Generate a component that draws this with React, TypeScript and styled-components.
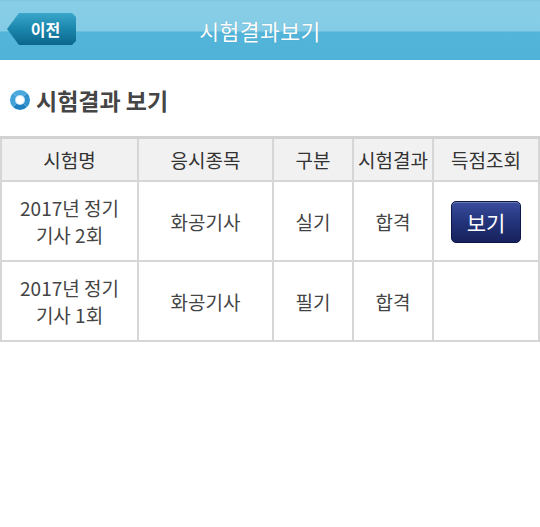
import React from 'react';
import styled, { createGlobalStyle } from 'styled-components';

const GlobalStyle = createGlobalStyle`
  html, body {
    margin: 0;
    padding: 0;
    background: #fff;
    font-family: "Noto Sans CJK KR", "Noto Sans", sans-serif;
  }
`;

const StyledHeader = styled.header`
  position: relative;
  height: 60px;
  display: flex;
  align-items: center;
  justify-content: center;
  padding-right: 20px;
  box-sizing: border-box;
  background: linear-gradient(
    to bottom,
    #7cc6e1 0,
    #88cee7 2px,
    #84cbe5 31px,
    #53b5d9 32px,
    #4fb2d7 60px
  );
`;

const StyledTitle = styled.h1`
  margin: 0;
  font-size: 21.5px;
  font-weight: 400;
  color: #fff;
  text-shadow: 0 0 1px rgba(0, 80, 120, 0.3);
  letter-spacing: 0.5px;
`;

const StyledBackButton = styled.button`
  position: absolute;
  left: 7px;
  top: 13px;
  width: 69px;
  height: 32px;
  border: none;
  padding: 0 0 0 8px;
  color: #fff;
  font-family: inherit;
  font-size: 16px;
  font-weight: 700;
  background: linear-gradient(to bottom, #3aa6c9 0%, #1b86ad 50%, #0b668b 100%);
  clip-path: polygon(12px 0, calc(100% - 4px) 0, 100% 4px, 100% calc(100% - 4px), calc(100% - 4px) 100%, 12px 100%, 0 50%);
`;

const StyledSection = styled.section`
  padding: 20px 0 0;
`;

const StyledSectionTitle = styled.h2`
  display: flex;
  align-items: center;
  gap: 6px;
  margin: 0 0 16px 10px;
  font-size: 23px;
  font-weight: 700;
  color: #454545;
  line-height: 40px;
`;

const StyledBullet = styled.span`
  width: 20px;
  height: 20px;
  border-radius: 50%;
  box-sizing: border-box;
  border: 5px solid #3aa0d6;
  background: #fff;
  background-clip: padding-box;
  box-shadow: inset 0 0 0 1px #b9def2;
  border-color: #4aa9dc #2f92cd #1f7fc0 #3fa2d8;
`;

const StyledTable = styled.table`
  width: 540px;
  border-collapse: collapse;
  table-layout: fixed;
  border-top: 3px solid #d2d2d2;
  color: #444;
`;

const StyledTh = styled.th<{ $width?: number }>`
  ${({ $width }) => ($width ? `width: ${$width}px;` : '')}
  height: 41px;
  padding: 0;
  background: #f1f1f1;
  border: 2px solid #d6d6d6;
  border-top: none;
  font-size: 19px;
  font-weight: 400;
  color: #333;
  text-align: center;
  white-space: nowrap;
`;

const StyledTd = styled.td`
  height: 78px;
  padding: 0;
  border: 2px solid #d6d6d6;
  font-size: 19px;
  line-height: 27px;
  color: #444;
  text-align: center;
`;

const StyledViewButton = styled.button`
  width: 70px;
  height: 42px;
  border: 1px solid #0e1848;
  border-radius: 5px;
  color: #fff;
  font-family: inherit;
  font-size: 21px;
  background: linear-gradient(to bottom, #3a4d9c 0%, #23337a 50%, #17225d 100%);
  box-shadow: inset 0 1px 0 rgba(255, 255, 255, 0.25);
  margin-top: 2px;
`;

const columns = [
  { label: '시험명', width: 135 },
  { label: '응시종목', width: 133 },
  { label: '구분', width: 78 },
  { label: '시험결과', width: 78 },
  { label: '득점조회' },
];

const results = [
  { round: '2회', subject: '화공기사', type: '실기', result: '합격', viewable: true },
  { round: '1회', subject: '화공기사', type: '필기', result: '합격', viewable: false },
];

export default function App() {
  return (
    <>
      <GlobalStyle />
      <StyledHeader>
        <StyledBackButton>이전</StyledBackButton>
        <StyledTitle>시험결과보기</StyledTitle>
      </StyledHeader>
      <StyledSection>
        <StyledSectionTitle>
          <StyledBullet />
          시험결과 보기
        </StyledSectionTitle>
        <StyledTable>
          <thead>
            <tr>
              {columns.map((col) => (
                <StyledTh key={col.label} $width={col.width}>
                  {col.label}
                </StyledTh>
              ))}
            </tr>
          </thead>
          <tbody>
            {results.map((row) => (
              <tr key={row.round}>
                <StyledTd>
                  2017년 정기
                  <br />
                  기사 {row.round}
                </StyledTd>
                <StyledTd>{row.subject}</StyledTd>
                <StyledTd>{row.type}</StyledTd>
                <StyledTd>{row.result}</StyledTd>
                <StyledTd>
                  {row.viewable && <StyledViewButton>보기</StyledViewButton>}
                </StyledTd>
              </tr>
            ))}
          </tbody>
        </StyledTable>
      </StyledSection>
    </>
  );
}
